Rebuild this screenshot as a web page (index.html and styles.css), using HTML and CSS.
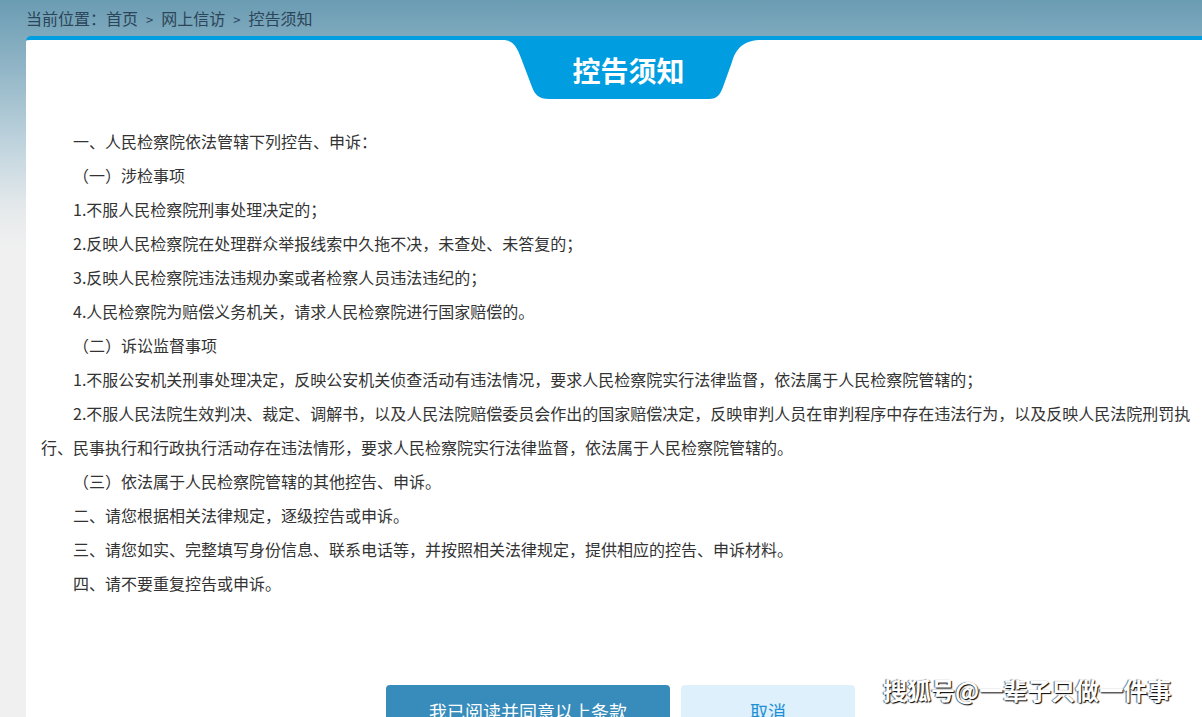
FILE: index.html
```html
<!DOCTYPE html>
<html lang="zh-CN">
<head>
<meta charset="utf-8">
<title>控告须知</title>
<link rel="stylesheet" href="styles.css">
</head>
<body>
<div class="page">
  <div class="crumb">当前位置：首页<span class="sep">&gt;</span>网上信访<span class="sep">&gt;</span>控告须知</div>
  <div class="card">
    <div class="tab-row">
      <div class="tab"><h1 class="tab-title">控告须知</h1></div>
    </div>
    <div class="content">
      <p>一、人民检察院依法管辖下列控告、申诉：</p>
      <p>（一）涉检事项</p>
      <p>1.不服人民检察院刑事处理决定的；</p>
      <p>2.反映人民检察院在处理群众举报线索中久拖不决，未查处、未答复的；</p>
      <p>3.反映人民检察院违法违规办案或者检察人员违法违纪的；</p>
      <p>4.人民检察院为赔偿义务机关，请求人民检察院进行国家赔偿的。</p>
      <p>（二）诉讼监督事项</p>
      <p>1.不服公安机关刑事处理决定，反映公安机关侦查活动有违法情况，要求人民检察院实行法律监督，依法属于人民检察院管辖的；</p>
      <p>2.不服人民法院生效判决、裁定、调解书，以及人民法院赔偿委员会作出的国家赔偿决定，反映审判人员在审判程序中存在违法行为，以及反映人民法院刑罚执行、民事执行和行政执行活动存在违法情形，要求人民检察院实行法律监督，依法属于人民检察院管辖的。</p>
      <p>（三）依法属于人民检察院管辖的其他控告、申诉。</p>
      <p>二、请您根据相关法律规定，逐级控告或申诉。</p>
      <p>三、请您如实、完整填写身份信息、联系电话等，并按照相关法律规定，提供相应的控告、申诉材料。</p>
      <p>四、请不要重复控告或申诉。</p>
    </div>
    <div class="actions">
      <button class="btn btn-primary" type="button">我已阅读并同意以上条款</button>
      <button class="btn btn-cancel" type="button">取消</button>
    </div>
  </div>
  <div class="watermark">搜狐号@一辈子只做一件事</div>
</div>
</body>
</html>
```
FILE: styles.css
```css
html, body {
  margin: 0;
  padding: 0;
  height: 717px;
  overflow: hidden;
}
body {
  background: #f0f0f0 linear-gradient(to bottom, #6a9cb3 0px, #8cb2c4 60px, #c3d6df 150px, #e6eaec 210px, #f0f0f0 250px) no-repeat;
  font-family: "Noto Sans CJK SC", "Noto Sans", sans-serif;
}
.page {
  position: relative;
  height: 717px;
}
.crumb {
  height: 36px;
  line-height: 36px;
  padding-left: 26px;
  font-size: 16px;
  color: #2c4558;
  box-sizing: border-box;
}
.crumb .sep {
  font-size: 13px;
  padding: 0 8px;
}
.card {
  margin-left: 26px;
  background: #fff;
  border-top: 4px solid #009ee0;
  border-top-left-radius: 5px;
  height: 700px;
}
.tab-row {
  display: flex;
  padding-left: 477px;
}
.tab {
  width: 259px;
  height: 59px;
  background: #009ee0;
  clip-path: path('M0,0 C10,0 14,7 18,18 L29,47 C32,55 36,59 46,59 L206,59 C214,59 217,55 220,47 L229,22 C233,8 241,0 259,0 Z');
  display: flex;
  align-items: center;
  justify-content: center;
}
.tab-title {
  margin: 0 8px 0 0;
  font-size: 28px;
  font-weight: 700;
  color: #fff;
  line-height: 1;
}
.content {
  padding: 25px 5px 0 15px;
  font-size: 16px;
  color: #333;
}
.content p {
  margin: 0;
  line-height: 34px;
  text-indent: 32px;
}
.actions {
  display: flex;
  gap: 11px;
  padding: 85px 0 0 360px;
}
.btn {
  height: 50px;
  border: none;
  border-radius: 4px;
  font-family: "Noto Sans CJK SC", "Noto Sans", sans-serif;
  font-size: 18px;
  line-height: 50px;
  padding: 1px 0 0;
}
.btn-primary {
  width: 284px;
  background: #378cbb;
  color: #fff;
}
.btn-cancel {
  width: 174px;
  background: #ddf0fb;
  color: #1d8fd5;
}
.watermark {
  position: absolute;
  left: 883px;
  top: 674px;
  font-size: 24px;
  font-weight: 700;
  color: #fff;
  text-shadow: 1px 1px 1px #000, -1px 0 1px rgba(0,0,0,0.6);
  line-height: 32px;
}
```
